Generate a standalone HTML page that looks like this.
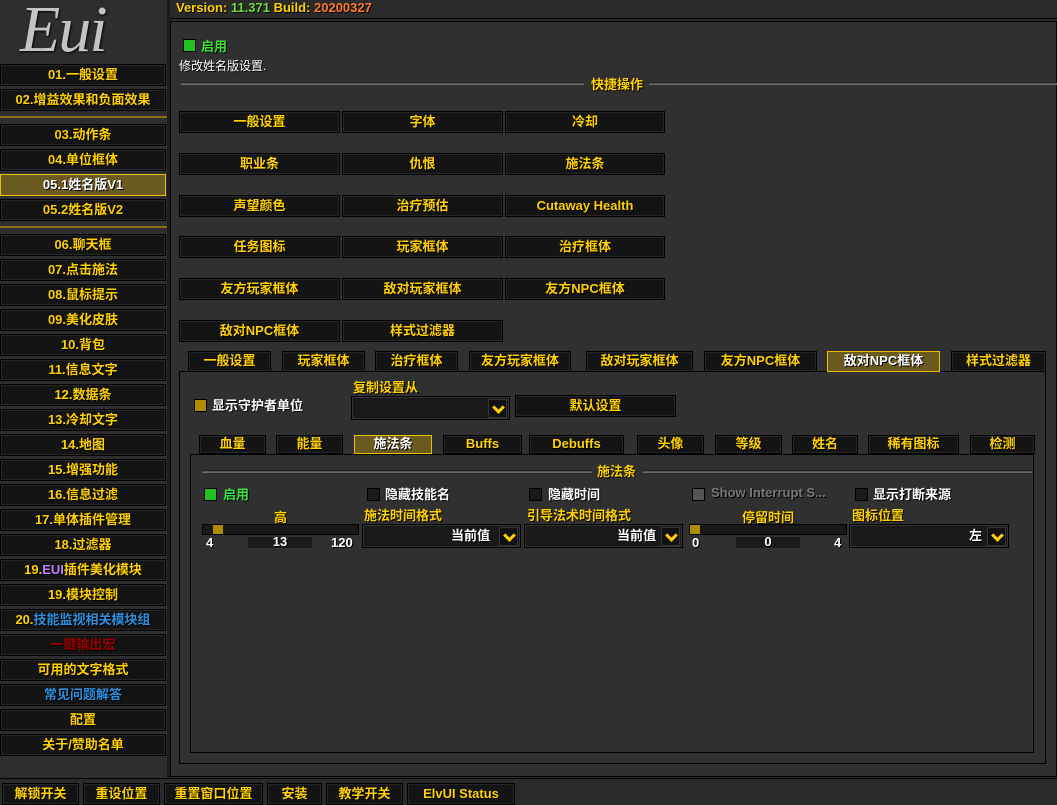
<!DOCTYPE html>
<html><head><meta charset="utf-8"><style>
*{margin:0;padding:0;box-sizing:border-box}
body{width:1057px;height:805px;background:#2e2e2e;position:relative;overflow:hidden;font-family:"Liberation Sans","Noto Sans CJK SC",sans-serif;font-weight:bold;font-size:13px;color:#ffd100;text-shadow:1px 1px 0 #000}
.a{position:absolute}
.b{position:absolute;background:#141414;border:1px solid #000;box-shadow:inset 0 0 0 1px #262626;text-align:center;color:#ffd100;line-height:19px;height:22px}
.sel{background:#6a5a20;border:1px solid #e8c000;color:#fff;box-shadow:none}
.sb{left:0;width:166px}
.cb{position:absolute;width:13px;height:13px;border:1px solid #000;background:#1a1a1a}
.line{position:absolute;height:3px;background:#555;border-top:1px solid #222;border-bottom:1px solid #6a6a6a}
.w{color:#fff}
.dd{position:absolute;background:#191919;border:1px solid #000;box-shadow:inset 0 0 0 1px #333;height:24px;color:#fff;text-align:right;line-height:21px}
.arr{position:absolute;right:2px;top:2px;width:19px;height:19px;background:#111;border:1px solid #333}
.arr:after{content:"";position:absolute;left:5px;top:3px;width:6px;height:6px;border-right:3px solid #ffd100;border-bottom:3px solid #ffd100;transform:rotate(45deg)}
</style></head><body>
<div class="a" style="left:0;top:0;width:167px;height:62px;background:#2e2e2e"></div>
<div class="a" style="left:20px;top:-8px;font-family:'Liberation Serif',serif;font-style:italic;font-weight:normal;font-size:66px;color:#c4c4c4;text-shadow:1px 1px 2px #000;letter-spacing:-2px">Eui</div>
<div class="a" style="left:167px;top:0;width:3px;height:780px;background:#1c1c1c"></div>

<div class="b sb" style="top:64px">01.一般设置</div>
<div class="b sb" style="top:89px">02.增益效果和负面效果</div>
<div class="a" style="left:0;top:116px;width:167px;height:2px;background:#8a7020"></div>
<div class="b sb" style="top:124px">03.动作条</div>
<div class="b sb" style="top:149px">04.单位框体</div>
<div class="b sb sel" style="top:174px">05.1姓名版V1</div>
<div class="b sb" style="top:199px">05.2姓名版V2</div>
<div class="a" style="left:0;top:226px;width:167px;height:2px;background:#8a7020"></div>
<div class="b sb" style="top:234px">06.聊天框</div>
<div class="b sb" style="top:259px">07.点击施法</div>
<div class="b sb" style="top:284px">08.鼠标提示</div>
<div class="b sb" style="top:309px">09.美化皮肤</div>
<div class="b sb" style="top:334px">10.背包</div>
<div class="b sb" style="top:359px">11.信息文字</div>
<div class="b sb" style="top:384px">12.数据条</div>
<div class="b sb" style="top:409px">13.冷却文字</div>
<div class="b sb" style="top:434px">14.地图</div>
<div class="b sb" style="top:459px">15.增强功能</div>
<div class="b sb" style="top:484px">16.信息过滤</div>
<div class="b sb" style="top:509px">17.单体插件管理</div>
<div class="b sb" style="top:534px">18.过滤器</div>
<div class="b sb" style="top:559px">19.<span style="color:#c080ff">EUI</span>插件美化模块</div>
<div class="b sb" style="top:584px">19.模块控制</div>
<div class="b sb" style="top:609px">20.<span style="color:#2e8fe0">技能监视相关模块组</span></div>
<div class="b sb" style="top:634px;color:#a00000">一键输出宏</div>
<div class="b sb" style="top:659px">可用的文字格式</div>
<div class="b sb" style="top:684px;color:#2e8fe0">常见问题解答</div>
<div class="b sb" style="top:709px">配置</div>
<div class="b sb" style="top:734px">关于/赞助名单</div>

<div class="a" style="left:170px;top:0;width:887px;height:19px;background:#2a2a2a;border-bottom:1px solid #000"></div>
<div class="a" style="left:176px;top:0px;font-size:13px">Version: <span style="color:#6fdc3c">11.371</span> Build: <span style="color:#ff7a30">20200327</span></div>
<div class="a" style="left:170px;top:21px;width:887px;height:756px;border:1px solid #000;background:#303030"></div>

<div class="cb" style="left:183px;top:39px;background:#1fc21f"></div>
<div class="a" style="left:201px;top:36px;color:#3ce03c">启用</div>
<div class="a w" style="left:179px;top:57px;font-weight:normal;font-size:12px">修改姓名版设置.</div>
<div class="line" style="left:181px;top:82px;width:403px"></div>
<div class="a" style="left:591px;top:74px">快捷操作</div>
<div class="line" style="left:649px;top:82px;width:408px"></div>

<div class="b" style="left:179px;top:111px;width:161px">一般设置</div>
<div class="b" style="left:342px;top:111px;width:161px">字体</div>
<div class="b" style="left:505px;top:111px;width:160px">冷却</div>
<div class="b" style="left:179px;top:153px;width:161px">职业条</div>
<div class="b" style="left:342px;top:153px;width:161px">仇恨</div>
<div class="b" style="left:505px;top:153px;width:160px">施法条</div>
<div class="b" style="left:179px;top:195px;width:161px">声望颜色</div>
<div class="b" style="left:342px;top:195px;width:161px">治疗预估</div>
<div class="b" style="left:505px;top:195px;width:160px">Cutaway Health</div>
<div class="b" style="left:179px;top:236px;width:161px">任务图标</div>
<div class="b" style="left:342px;top:236px;width:161px">玩家框体</div>
<div class="b" style="left:505px;top:236px;width:160px">治疗框体</div>
<div class="b" style="left:179px;top:278px;width:161px">友方玩家框体</div>
<div class="b" style="left:342px;top:278px;width:161px">敌对玩家框体</div>
<div class="b" style="left:505px;top:278px;width:160px">友方NPC框体</div>
<div class="b" style="left:179px;top:320px;width:161px">敌对NPC框体</div>
<div class="b" style="left:342px;top:320px;width:161px">样式过滤器</div>

<div class="a" style="left:179px;top:371px;width:867px;height:393px;border:1px solid #000;background:#303030"></div>
<div class="b" style="left:188px;top:351px;width:83px;height:21px;line-height:18px">一般设置</div>
<div class="b" style="left:282px;top:351px;width:83px;height:21px;line-height:18px">玩家框体</div>
<div class="b" style="left:375px;top:351px;width:83px;height:21px;line-height:18px">治疗框体</div>
<div class="b" style="left:469px;top:351px;width:102px;height:21px;line-height:18px">友方玩家框体</div>
<div class="b" style="left:586px;top:351px;width:107px;height:21px;line-height:18px">敌对玩家框体</div>
<div class="b" style="left:704px;top:351px;width:113px;height:21px;line-height:18px">友方NPC框体</div>
<div class="b sel" style="left:827px;top:351px;width:113px;height:21px;line-height:18px">敌对NPC框体</div>
<div class="b" style="left:951px;top:351px;width:95px;height:21px;line-height:18px">样式过滤器</div>

<div class="cb" style="left:194px;top:399px;background:#b08c00"></div>
<div class="a w" style="left:212px;top:395px">显示守护者单位</div>
<div class="a" style="left:353px;top:377px">复制设置从</div>
<div class="dd" style="left:351px;top:396px;width:159px"><div class="arr"></div></div>
<div class="b" style="left:515px;top:395px;width:161px">默认设置</div>

<div class="a" style="left:190px;top:454px;width:844px;height:299px;border:1px solid #000;background:#303030"></div>
<div class="b" style="left:199px;top:435px;width:67px;height:19px;line-height:16px">血量</div>
<div class="b" style="left:276px;top:435px;width:67px;height:19px;line-height:16px">能量</div>
<div class="b sel" style="left:354px;top:435px;width:78px;height:19px;line-height:16px">施法条</div>
<div class="b" style="left:443px;top:435px;width:79px;height:19px;line-height:16px">Buffs</div>
<div class="b" style="left:529px;top:435px;width:95px;height:19px;line-height:16px">Debuffs</div>
<div class="b" style="left:637px;top:435px;width:67px;height:19px;line-height:16px">头像</div>
<div class="b" style="left:715px;top:435px;width:67px;height:19px;line-height:16px">等级</div>
<div class="b" style="left:792px;top:435px;width:66px;height:19px;line-height:16px">姓名</div>
<div class="b" style="left:868px;top:435px;width:91px;height:19px;line-height:16px">稀有图标</div>
<div class="b" style="left:970px;top:435px;width:65px;height:19px;line-height:16px">检测</div>

<div class="line" style="left:202px;top:470px;width:390px"></div>
<div class="a" style="left:597px;top:461px">施法条</div>
<div class="line" style="left:643px;top:470px;width:389px"></div>

<div class="cb" style="left:204px;top:488px;background:#1fc21f"></div>
<div class="a" style="left:223px;top:484px;color:#3ce03c">启用</div>
<div class="cb" style="left:367px;top:488px"></div>
<div class="a w" style="left:385px;top:484px">隐藏技能名</div>
<div class="cb" style="left:529px;top:488px"></div>
<div class="a w" style="left:548px;top:484px">隐藏时间</div>
<div class="cb" style="left:692px;top:488px;background:#555"></div>
<div class="a" style="left:711px;top:485px;color:#777">Show Interrupt S...</div>
<div class="cb" style="left:855px;top:488px"></div>
<div class="a w" style="left:873px;top:484px">显示打断来源</div>

<div class="a" style="left:274px;top:507px">高</div>
<div class="a" style="left:202px;top:524px;width:157px;height:11px;background:#191919;border:1px solid #000"></div>
<div class="a" style="left:213px;top:525px;width:10px;height:9px;background:#b08c00"></div>
<div class="a w" style="left:206px;top:535px">4</div>
<div class="a w" style="left:247px;top:536px;width:66px;height:13px;background:#1a1a1a;border:1px solid #333;text-align:center;line-height:10px">13</div>
<div class="a w" style="left:331px;top:535px">120</div>

<div class="a" style="left:364px;top:505px">施法时间格式</div>
<div class="dd" style="left:362px;top:524px;width:159px;padding-right:30px">当前值<div class="arr"></div></div>
<div class="a" style="left:527px;top:505px">引导法术时间格式</div>
<div class="dd" style="left:524px;top:524px;width:159px;padding-right:26px">当前值<div class="arr"></div></div>

<div class="a" style="left:742px;top:507px">停留时间</div>
<div class="a" style="left:689px;top:524px;width:158px;height:11px;background:#191919;border:1px solid #000"></div>
<div class="a" style="left:690px;top:525px;width:10px;height:9px;background:#b08c00"></div>
<div class="a w" style="left:692px;top:535px">0</div>
<div class="a w" style="left:735px;top:536px;width:66px;height:13px;background:#1a1a1a;border:1px solid #333;text-align:center;line-height:10px">0</div>
<div class="a w" style="left:834px;top:535px">4</div>

<div class="a" style="left:852px;top:505px">图标位置</div>
<div class="dd" style="left:849px;top:524px;width:160px;padding-right:26px">左<div class="arr"></div></div>

<div class="a" style="left:0;top:778px;width:1057px;height:27px;background:#2a2a2a;border-top:1px solid #000"></div>
<div class="b" style="left:2px;top:783px;width:77px">解锁开关</div>
<div class="b" style="left:83px;top:783px;width:77px">重设位置</div>
<div class="b" style="left:164px;top:783px;width:99px">重置窗口位置</div>
<div class="b" style="left:267px;top:783px;width:55px">安装</div>
<div class="b" style="left:326px;top:783px;width:77px">教学开关</div>
<div class="b" style="left:407px;top:783px;width:108px">ElvUI Status</div>
</body></html>
